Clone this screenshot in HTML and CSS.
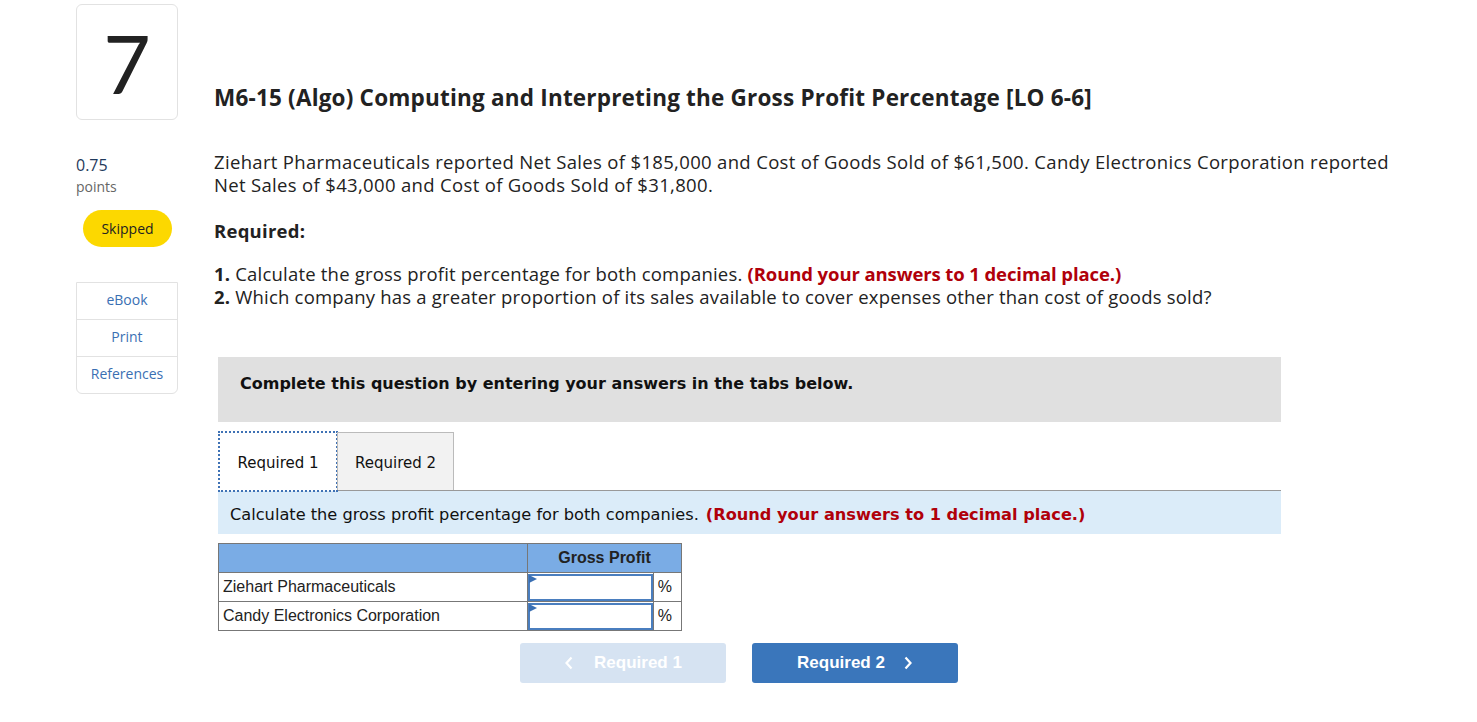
FILE: index.html
```html
<!DOCTYPE html>
<html lang="en">
<head>
<meta charset="utf-8">
<title>M6-15 (Algo)</title>
<link rel="stylesheet" href="styles.css">
</head>
<body>
<div class="page">
  <aside class="side">
    <div class="qnum">7</div>
    <div class="score">0.75</div>
    <div class="pts">points</div>
    <div class="pill">Skipped</div>
    <div class="tools">
      <div class="tool">eBook</div>
      <div class="tool">Print</div>
      <div class="tool">References</div>
    </div>
  </aside>
  <main class="main">
    <h1 class="title">M6-15 (Algo) Computing and Interpreting the Gross Profit Percentage [LO 6-6]</h1>
    <p class="para">Ziehart Pharmaceuticals reported Net Sales of $185,000 and Cost of Goods Sold of $61,500. Candy Electronics Corporation reported Net Sales of $43,000 and Cost of Goods Sold of $31,800.</p>
    <p class="req">Required:</p>
    <ol class="list">
      <li><b>1.</b> Calculate the gross profit percentage for both companies. <span class="red">(Round your answers to 1 decimal place.)</span></li>
      <li><b>2.</b> Which company has a greater proportion of its sales available to cover expenses other than cost of goods sold?</li>
    </ol>
    <div class="work">
      <div class="banner">Complete this question by entering your answers in the tabs below.</div>
      <div class="tabs">
        <div class="tab active">Required 1</div>
        <div class="tab">Required 2</div>
      </div>
      <div class="instr">Calculate the gross profit percentage for both companies. <span class="ired">(Round your answers to 1 decimal place.)</span></div>
      <table class="grid">
        <tr class="head"><th class="c1"></th><th class="c2" colspan="2">Gross Profit</th></tr>
        <tr><td class="c1">Ziehart Pharmaceuticals</td><td class="c2"><div class="inp"></div></td><td class="c3">%</td></tr>
        <tr><td class="c1">Candy Electronics Corporation</td><td class="c2"><div class="inp"></div></td><td class="c3">%</td></tr>
      </table>
      <div class="nav">
        <div class="btn prev"><svg class="chev" viewBox="0 0 10 14" width="10" height="14"><path d="M7.5 1.5 L2.5 7 L7.5 12.5" fill="none" stroke="#fff" stroke-width="2.2"/></svg>Required 1</div>
        <div class="btn next">Required 2<svg class="chev r" viewBox="0 0 10 14" width="10" height="14"><path d="M2.5 1.5 L7.5 7 L2.5 12.5" fill="none" stroke="#fff" stroke-width="2.2"/></svg></div>
      </div>
    </div>
  </main>
</div>
</body>
</html>
```

FILE: styles.css
```css
* { box-sizing: border-box; }
html, body { margin: 0; padding: 0; background: #fff; }
body { font-family: "Open Sans", "Liberation Sans", sans-serif; color: #222; }
.page { display: flex; padding-left: 76px; }
.side { width: 102px; flex: none; display: flex; flex-direction: column; }
.qnum {
  margin-top: 4px; height: 116px; border: 1px solid #e2e2e2; border-radius: 6px;
  display: flex; align-items: center; justify-content: center;
  font-family: Lato, sans-serif; font-size: 82px; color: #222; line-height: 1;
}
.score { margin-top: 35px; font-size: 16px; color: #1f3a5c; line-height: 20px; }
.pts { font-size: 14px; color: #666; line-height: 20px; margin-top: 2px; }
.pill {
  margin-top: 13px; margin-left: 7px; width: 89px; height: 37px; border-radius: 19px;
  background: #fcd800; color: #222; font-size: 14px;
  display: flex; align-items: center; justify-content: center;
}
.tools { margin-top: 35px; border: 1px solid #e2e2e2; border-radius: 0 0 6px 6px; }
.tool {
  height: 37px; display: flex; align-items: center; justify-content: center;
  color: #3a6fb3; font-size: 14px; border-top: 1px solid #e2e2e2; padding-bottom: 3px;
}
.tool:first-child { border-top: none; height: 36px; }
.main { margin-left: 36px; width: 1186px; }
.title { margin: 85px 0 0; font-size: 22.5px; line-height: 26px; font-weight: 700; color: #222; letter-spacing: 0.2px; }
.para { margin: 39px 0 0; font-size: 18.5px; line-height: 23px; letter-spacing: 0.33px; }
.req { margin: 23px 0 0; font-size: 18.5px; line-height: 23px; font-weight: 700; letter-spacing: 0.25px; }
.list { margin: 20px 0 0; padding: 0; list-style: none; font-size: 18.5px; line-height: 23px; letter-spacing: 0.2px; }
.list b { font-weight: 700; }
.red { color: #b0000a; font-weight: 700; letter-spacing: -0.1px; }
.work { margin-left: 4px; width: 1063px; margin-top: 49px; }
.banner {
  height: 65px; background: #e0e0e0; padding: 17px 0 0 22px; line-height: 20px;
  font-family: "DejaVu Sans", Verdana, sans-serif; font-weight: 700; font-size: 16px; color: #111;
}
.tabs { margin-top: 10px; display: flex; border-bottom: 1px solid #999; height: 59px; }
.tab {
  width: 117px; height: 58px; display: flex; align-items: center; justify-content: center;
  font-family: "DejaVu Sans", Verdana, sans-serif; font-size: 15px; color: #111;
  background: #f2f2f2; border: 1px solid #bbb; border-bottom: none; padding-top: 2px;
}
.tab.active { width: 118px; margin-left: 1px; background: #fff; border: none; outline: 2px dotted #3f72b5; outline-offset: -1px; height: 59px; }
.instr {
  height: 43px; background: #dbecf9; padding-left: 12px; padding-top: 3px; display: flex; align-items: center;
  font-family: "DejaVu Sans", Verdana, sans-serif; font-size: 16.2px; color: #111;
}
.ired { color: #b0000a; font-weight: 700; margin-left: 7px; }
.grid { margin-top: 9px; border-collapse: collapse; font-family: "Liberation Sans", Arial, sans-serif; font-size: 16px; }
.grid td, .grid th { border: 1px solid #777; height: 29px; padding: 0; }
.head th { background: #7aace5; font-weight: 700; color: #222; }
.grid .c1 { width: 309px; padding-left: 4px; text-align: left; }
.grid th.c2 { width: 154px; text-align: center; }
.grid td.c2 { width: 125px; padding: 0; }
.grid .c3 { width: 28px; padding-left: 4px; }
.inp { position: relative; height: 27px; border: 2px solid #4a7ebf; background: #fff; }
.inp::before {
  content: ""; position: absolute; left: -1px; top: -1px;
  border-left: 8px solid #3a6fb3; border-top: 4px solid transparent; border-bottom: 4px solid transparent;
}
.nav { margin-top: 12px; padding-left: 302px; display: flex; gap: 26px; }
.btn {
  width: 206px; height: 40px; border-radius: 3px; display: flex; align-items: center; justify-content: center;
  font-family: "Liberation Sans", Arial, sans-serif; font-weight: 700; font-size: 17px; color: #fff;
}
.prev { background: #d6e3f2; }
.next { background: #3a76bb; }
.chev { margin-right: 20px; }
.chev.r { margin-right: 0; margin-left: 18px; }
```
